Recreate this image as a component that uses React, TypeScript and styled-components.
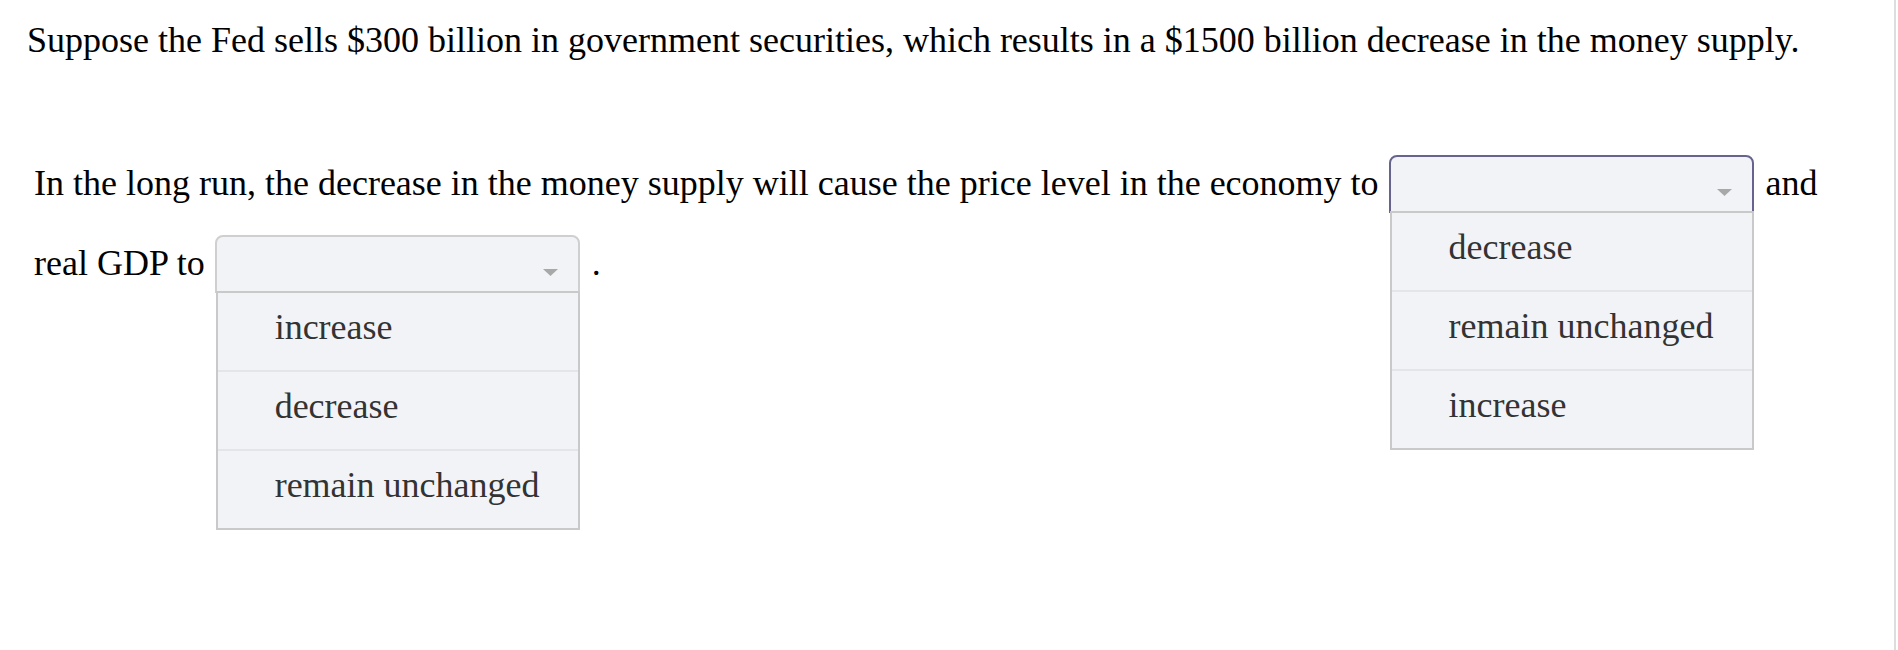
import React from "react";
import styled, { createGlobalStyle } from "styled-components";

const GlobalStyle = createGlobalStyle`
    html, body {
        margin: 0;
        padding: 0;
        background: #ffffff;
    }

    body {
        font-family: "Liberation Serif", "Times New Roman", serif;
        color: #000000;
    }
`;

const Page = styled.div`
    box-sizing: border-box;
    width: 1896px;
    height: 650px;
    padding: 19px 0 0 27px;
    border-right: 2px solid #dddddd;
    font-size: 36px;
`;

const Question = styled.p`
    margin: 0;
    line-height: normal;
`;

const Prompt = styled.p`
    margin: 82px 0 0 7px;
    line-height: 80px;
`;

const SelectBox = styled.span<{ $focused?: boolean }>`
    position: relative;
    display: inline-flex;
    justify-content: flex-end;
    align-items: flex-end;
    box-sizing: border-box;
    width: 365px;
    height: 58px;
    margin: 12px 3px 0 1px;
    padding: 0 20px 15px 0;
    vertical-align: top;
    background: #f2f3f7;
    border: 2px solid ${(p) => (p.$focused ? "#67638f" : "#cfcfcf")};
    border-radius: 8px 8px 0 0;
    line-height: normal;

    svg {
        display: block;
    }
`;

const Menu = styled.ul`
    position: absolute;
    top: 100%;
    left: -1px;
    z-index: 2;
    box-sizing: border-box;
    width: 364px;
    margin: 0;
    padding: 0;
    list-style: none;
    background: #f2f3f7;
    border: 2px solid #c9c9c9;
`;

const Option = styled.li`
    box-sizing: border-box;
    height: 77px;
    padding: 13px 0 0 57px;
    font-size: 36px;
    line-height: normal;
    color: #333333;

    & + & {
        height: 79px;
        border-top: 2px solid #e4e5e9;
    }
`;

const Caret = () => (
    <svg width="15" height="7" viewBox="0 0 15 7">
        <polygon points="0,0 15,0 7.5,7" fill="#a8a8a8" />
    </svg>
);

interface DropdownProps {
    options: string[];
    focused?: boolean;
}

const Dropdown = (props: DropdownProps) => {
    return (
        <SelectBox $focused={props.focused}>
            <Caret />
            <Menu>
                {props.options.map((option) => (
                    <Option key={option}>{option}</Option>
                ))}
            </Menu>
        </SelectBox>
    );
};

const App = () => {
    return (
        <>
            <GlobalStyle />
            <Page>
                <Question>
                    Suppose the Fed sells $300 billion in government securities, which results in a $1500 billion
                    decrease in the money supply.
                </Question>
                <Prompt>
                    In the long run, the decrease in the money supply will cause the price level in the economy to{" "}
                    <Dropdown focused options={["decrease", "remain unchanged", "increase"]} /> and
                    <br />
                    real GDP to <Dropdown options={["increase", "decrease", "remain unchanged"]} /> .
                </Prompt>
            </Page>
        </>
    );
};

export default App;
